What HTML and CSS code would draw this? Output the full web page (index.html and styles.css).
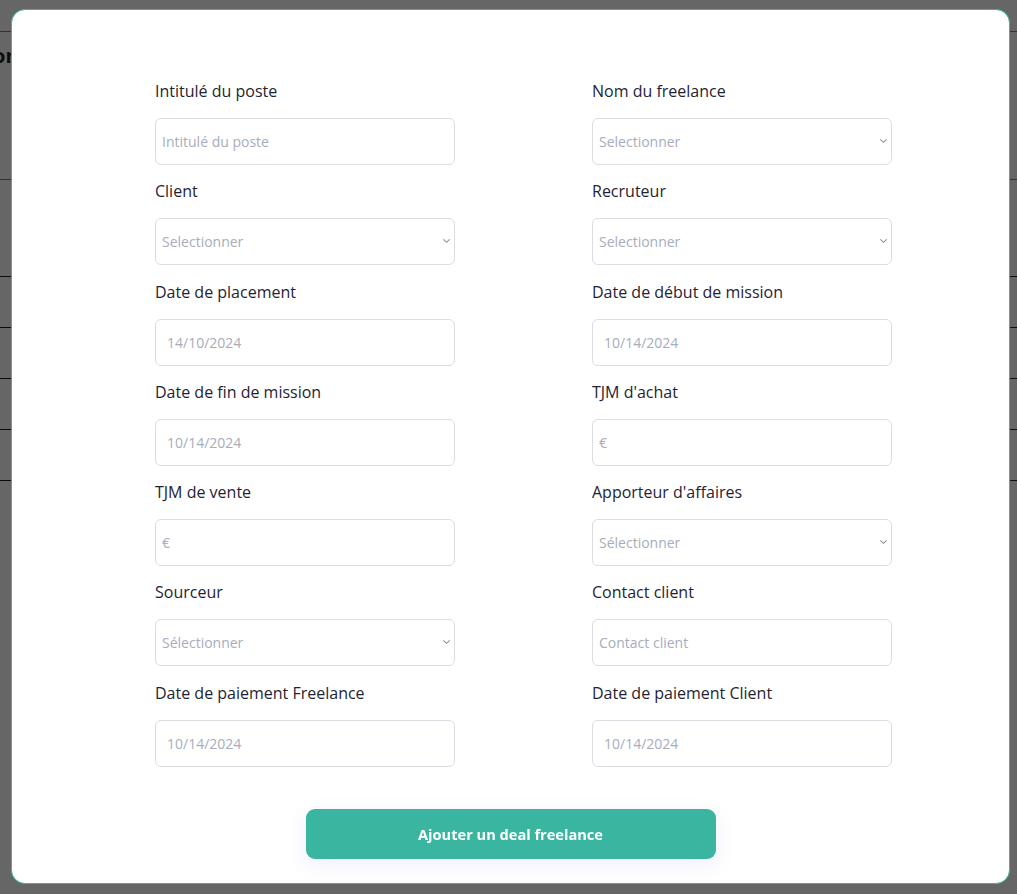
FILE: index.html
```html
<!DOCTYPE html>
<html lang="fr">

<head>
    <meta charset="UTF-8">
    <meta name="viewport" content="width=device-width, initial-scale=1.0">
    <title>Deals freelance</title>
    <link rel="stylesheet" href="styles.css">
</head>

<body>
    <!-- page behind the modal -->
    <div class="page">
        <div class="topbar"></div>
        <h2 class="page-title">Gestion</h2>
        <div class="row row-head"></div>
        <div class="row"></div>
        <div class="row"></div>
        <div class="row"></div>
        <div class="row"></div>
    </div>

    <div class="overlay">
        <div class="modal">
            <form class="deal-form">
                <div class="field">
                    <label>Intitulé du poste</label>
                    <input type="text" placeholder="Intitulé du poste">
                </div>
                <div class="field">
                    <label>Nom du freelance</label>
                    <div class="select">
                        <select><option>Selectionner</option></select>
                        <svg viewBox="0 0 10 6"><path d="M1.5 1.2 5 4.5 8.5 1.2"/></svg>
                    </div>
                </div>

                <div class="field">
                    <label>Client</label>
                    <div class="select">
                        <select><option>Selectionner</option></select>
                        <svg viewBox="0 0 10 6"><path d="M1.5 1.2 5 4.5 8.5 1.2"/></svg>
                    </div>
                </div>
                <div class="field">
                    <label>Recruteur</label>
                    <div class="select">
                        <select><option>Selectionner</option></select>
                        <svg viewBox="0 0 10 6"><path d="M1.5 1.2 5 4.5 8.5 1.2"/></svg>
                    </div>
                </div>

                <div class="field">
                    <label>Date de placement</label>
                    <input type="text" class="date" placeholder="14/10/2024">
                </div>
                <div class="field">
                    <label>Date de début de mission</label>
                    <input type="text" class="date" placeholder="10/14/2024">
                </div>

                <div class="field">
                    <label>Date de fin de mission</label>
                    <input type="text" class="date" placeholder="10/14/2024">
                </div>
                <div class="field">
                    <label>TJM d'achat</label>
                    <input type="text" placeholder="€">
                </div>

                <div class="field">
                    <label>TJM de vente</label>
                    <input type="text" placeholder="€">
                </div>
                <div class="field">
                    <label>Apporteur d'affaires</label>
                    <div class="select">
                        <select><option>Sélectionner</option></select>
                        <svg viewBox="0 0 10 6"><path d="M1.5 1.2 5 4.5 8.5 1.2"/></svg>
                    </div>
                </div>

                <div class="field">
                    <label>Sourceur</label>
                    <div class="select">
                        <select><option>Sélectionner</option></select>
                        <svg viewBox="0 0 10 6"><path d="M1.5 1.2 5 4.5 8.5 1.2"/></svg>
                    </div>
                </div>
                <div class="field">
                    <label>Contact client</label>
                    <input type="text" placeholder="Contact client">
                </div>

                <div class="field">
                    <label>Date de paiement Freelance</label>
                    <input type="text" class="date" placeholder="10/14/2024">
                </div>
                <div class="field">
                    <label>Date de paiement Client</label>
                    <input type="text" class="date" placeholder="10/14/2024">
                </div>
            </form>

            <div class="actions">
                <button type="button" class="submit-button">Ajouter un deal freelance</button>
            </div>
        </div>
    </div>
</body>

</html>
```

FILE: styles.css
```css
body {
    font-family: 'Open Sans', sans-serif;
    margin: 0;
    padding: 0;
    background-color: #fff;
    color: #212529;
    overflow: hidden;
    height: 894px;
}

.page {
    height: 894px;
}

.topbar {
    height: 31px;
    border-bottom: 1px solid #2fa58f;
}

.page-title {
    margin: 10px 0 0 -58px;
    font-size: 20px;
    font-weight: 700;
    height: 137px;
    border-bottom: 1px solid #2fa58f;
}

.row {
    height: 50px;
    border-bottom: 1px solid #222;
}

.row-head {
    height: 96px;
}

.overlay {
    position: fixed;
    inset: 0;
    background-color: rgba(0, 0, 0, 0.6);
}

.modal {
    position: absolute;
    left: 11px;
    top: 9px;
    width: 997px;
    height: 873px;
    background-color: #fff;
    border: 1px solid #3ab5a0;
    border-radius: 14px;
    box-sizing: content-box;
}

.deal-form {
    display: grid;
    grid-template-columns: 300px 300px;
    column-gap: 137px;
    row-gap: 14.3px;
    padding: 69px 0 0 143px;
}

.field {
    display: flex;
    flex-direction: column;
}

.field label {
    font-size: 16px;
    line-height: 24px;
    color: #1f2433;
    margin-bottom: 15px;
}

.field input,
.field select {
    width: 300px;
    height: 47px;
    box-sizing: border-box;
    border: 1px solid #dddce5;
    border-radius: 6px;
    padding: 0 6px;
    font-family: 'Open Sans', sans-serif;
    font-size: 14px;
    color: #a3a9b8;
    background-color: #fff;
    outline: none;
}

.field input::placeholder {
    color: #a7adbb;
}

.field input.date {
    padding-left: 11px;
}

.select {
    position: relative;
}

.field select {
    appearance: none;
    -webkit-appearance: none;
    color: #a7adbb;
}

.select svg {
    position: absolute;
    right: 4px;
    top: 20px;
    width: 9px;
    height: 6px;
    fill: none;
    stroke: #8a8f99;
    stroke-width: 1.2;
}

.actions {
    display: flex;
    justify-content: center;
    padding-top: 42px;
}

.submit-button {
    cursor: pointer;
    width: 410px;
    height: 50px;
    background-color: #3ab5a0;
    color: #fff;
    border: none;
    border-radius: 9px;
    font-family: 'Open Sans', sans-serif;
    font-size: 14.6px;
    font-weight: 700;
    box-shadow: 0 6px 20px rgba(120, 120, 240, 0.12);
}
```
